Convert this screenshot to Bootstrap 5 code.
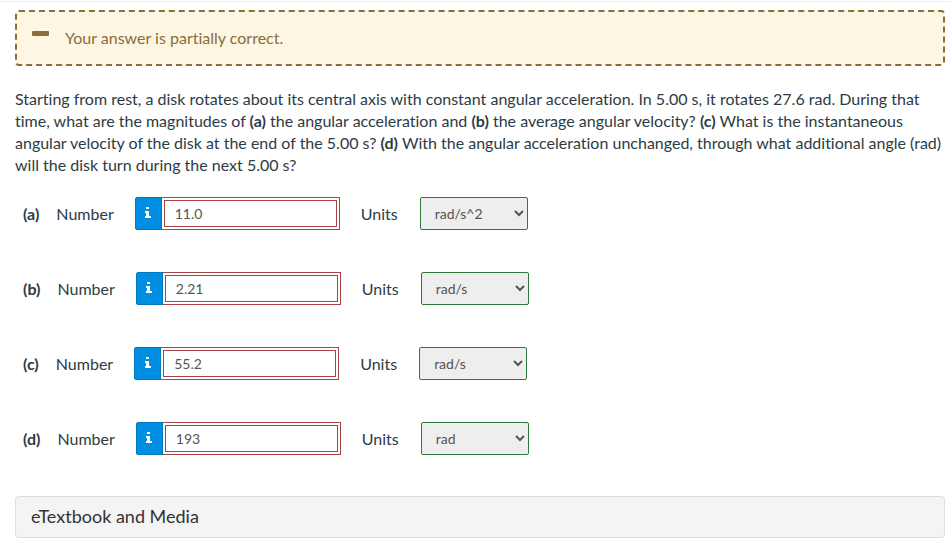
<!DOCTYPE html>
<html lang="en">
<head>
<meta charset="utf-8">
<meta name="viewport" content="width=device-width, initial-scale=1">
<title>Rotational motion question</title>
<link rel="stylesheet" href="https://cdn.jsdelivr.net/npm/bootstrap@5.3.0/dist/css/bootstrap.min.css">
<style>
body { font-family: Lato, sans-serif; font-size: 16px; line-height: 22px; font-variant-ligatures: none; color: #373a3c; border-top: 1px solid #fff; }
.page { border-top: 1px solid #eee; padding: 8px 6px 0 15px; }
.status { border: 2px dashed #8a6d3b; border-radius: 4px; background: #fdf6e3; color: #8a6d3b; padding: 15px; }
.status svg { width: 17px; height: 5px; margin: 4px 16px 0 0; }
.status span { padding-bottom: 0; }
.question { color: #2d3b45; margin: 22px 0 21px; }
.answer { padding-left: 8px; margin-bottom: 42px; }
.answer:last-child { margin-bottom: 41px; }
.answer .part { margin-right: 17px; color: #2d3b45; }
.answer .num-label { margin-right: 21px; color: #2d3b45; }
.answer .unit-label { margin: 0 22px 0 21px; color: #2d3b45; }
.answer .input-group { width: 205px; height: 33px; }
.info { width: 27px; padding: 0; background: #008ee2; border: 1px solid #0079c1; border-radius: 2px 0 0 2px; }
.info:hover { background: #0079c1; }
.info svg { width: 6px; height: 11px; display: block; margin: -3px auto 0; }
.answer .number { border: 4px double #a94442; border-radius: 0; font-size: 14px; line-height: 20px; color: #555; padding: 0 10px; height: 33px; }
.answer .unit { width: 108px; height: 33px; border: 1px solid #2f7a38; border-radius: 2px; background: #eee; color: #555; font-size: 14px; line-height: 20px; padding: 0 0 0 10px; appearance: auto; }
.media { border: 1px solid #ddd; border-radius: 4px; background: #f4f4f4; color: #333; font-size: 18px; line-height: 20px; padding: 9px 15px 11px; }
</style>
</head>
<body>
<main class="page">
  <div class="status d-flex align-items-start" role="status">
    <svg viewBox="0 0 17 5" aria-hidden="true"><rect width="17" height="5" rx="1" fill="#8a6d3b"/></svg>
    <span>Your answer is partially correct.</span>
  </div>
  <p class="question">Starting from rest, a disk rotates about its central axis with constant angular acceleration. In 5.00 s, it rotates 27.6 rad. During that time, what are the magnitudes of <b>(a)</b> the angular acceleration and <b>(b)</b> the average angular velocity? <b>(c)</b> What is the instantaneous angular velocity of the disk at the end of the 5.00 s? <b>(d)</b> With the angular acceleration unchanged, through what additional angle (rad) will the disk turn during the next 5.00 s?</p>
  <form>
    <div class="answer d-flex align-items-center">
      <b class="part">(a)</b><label class="num-label" for="na">Number</label>
      <div class="input-group flex-nowrap">
        <button type="button" class="btn info" aria-label="Information about part a"><svg viewBox="0 0 6 11" fill="#fff"><path d="M1 0h3v2H1zM0 4h4v5h2v2H0V9h1V6H0z"/></svg></button>
        <input class="form-control number" id="na" value="11.0">
      </div>
      <label class="unit-label" for="ua">Units</label>
      <select class="unit" id="ua"><option>rad/s^2</option><option>rad/s</option><option>rad</option></select>
    </div>
    <div class="answer d-flex align-items-center">
      <b class="part">(b)</b><label class="num-label" for="nb">Number</label>
      <div class="input-group flex-nowrap">
        <button type="button" class="btn info" aria-label="Information about part b"><svg viewBox="0 0 6 11" fill="#fff"><path d="M1 0h3v2H1zM0 4h4v5h2v2H0V9h1V6H0z"/></svg></button>
        <input class="form-control number" id="nb" value="2.21">
      </div>
      <label class="unit-label" for="ub">Units</label>
      <select class="unit" id="ub"><option>rad/s</option><option>rad/s^2</option><option>rad</option></select>
    </div>
    <div class="answer d-flex align-items-center">
      <b class="part">(c)</b><label class="num-label" for="nc">Number</label>
      <div class="input-group flex-nowrap">
        <button type="button" class="btn info" aria-label="Information about part c"><svg viewBox="0 0 6 11" fill="#fff"><path d="M1 0h3v2H1zM0 4h4v5h2v2H0V9h1V6H0z"/></svg></button>
        <input class="form-control number" id="nc" value="55.2">
      </div>
      <label class="unit-label" for="uc">Units</label>
      <select class="unit" id="uc"><option>rad/s</option><option>rad/s^2</option><option>rad</option></select>
    </div>
    <div class="answer d-flex align-items-center">
      <b class="part">(d)</b><label class="num-label" for="nd">Number</label>
      <div class="input-group flex-nowrap">
        <button type="button" class="btn info" aria-label="Information about part d"><svg viewBox="0 0 6 11" fill="#fff"><path d="M1 0h3v2H1zM0 4h4v5h2v2H0V9h1V6H0z"/></svg></button>
        <input class="form-control number" id="nd" value="193">
      </div>
      <label class="unit-label" for="ud">Units</label>
      <select class="unit" id="ud"><option>rad</option><option>rad/s</option><option>rad/s^2</option></select>
    </div>
  </form>
  <div class="media">eTextbook and Media</div>
</main>
<script src="https://cdn.jsdelivr.net/npm/bootstrap@5.3.0/dist/js/bootstrap.bundle.min.js"></script>
</body>
</html>
